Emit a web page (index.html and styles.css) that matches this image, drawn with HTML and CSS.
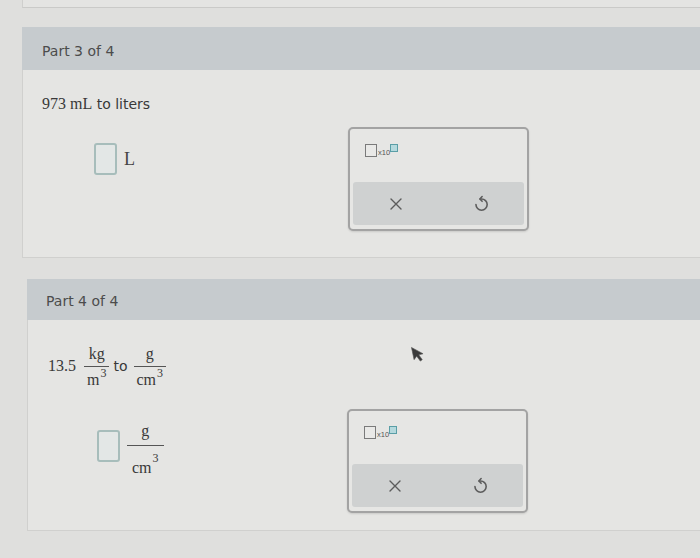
FILE: index.html
```html
<!DOCTYPE html>
<html lang="en">
<head>
<meta charset="utf-8">
<title>Parts</title>
<link rel="stylesheet" href="styles.css">
</head>
<body>
<div class="page">
  <div class="card-stub"></div>

  <section class="card card--p3">
    <div class="card-head">Part 3 of 4</div>
    <div class="card-body">
      <p class="question"><span class="serif">973 mL</span> to liters</p>
      <div class="row">
        <div class="answer answer--p3">
          <span class="input"></span><span class="unit">L</span>
        </div>
        <div class="toolbox">
          <div class="tool-top">
            <span class="sci"><span class="sci-box"></span><span class="sci-x">x10</span><span class="sci-exp"></span></span>
          </div>
          <div class="tool-actions">
            <span class="tool-btn"><svg width="14" height="14" viewBox="0 0 14 14"><path d="M2 2L12 12M12 2L2 12" stroke="#5c5c5c" stroke-width="1.4" fill="none" stroke-linecap="round"/></svg></span>
            <span class="tool-btn"><svg width="18" height="18" viewBox="0 0 16 16"><path d="M7.2 3.5h1.3a5 5 0 1 1-5 5" stroke="#5c5c5c" stroke-width="1.4" fill="none" stroke-linecap="round"/><path d="M9 1.4L7 3.5L9 5.6" stroke="#5c5c5c" stroke-width="1.4" fill="none" stroke-linecap="round" stroke-linejoin="round"/></svg></span>
          </div>
        </div>
      </div>
    </div>
  </section>

  <section class="card card--p4">
    <div class="card-head">Part 4 of 4</div>
    <div class="card-body">
      <p class="question question--math"><span class="serif">13.5</span><span class="frac q-frac"><span class="frac-num">kg</span><span class="frac-bar"></span><span class="frac-den"><span class="base">m</span><span class="exp">3</span></span></span><span class="to">to</span><span class="frac"><span class="frac-num">g</span><span class="frac-bar"></span><span class="frac-den"><span class="base">cm</span><span class="exp">3</span></span></span></p>
      <div class="row">
        <div class="answer answer--p4">
          <span class="input"></span>
          <span class="frac frac--ans"><span class="frac-num">g</span><span class="frac-bar"></span><span class="frac-den"><span class="base">cm</span><span class="exp">3</span></span></span>
        </div>
        <div class="toolbox">
          <div class="tool-top">
            <span class="sci"><span class="sci-box"></span><span class="sci-x">x10</span><span class="sci-exp"></span></span>
          </div>
          <div class="tool-actions">
            <span class="tool-btn"><svg width="14" height="14" viewBox="0 0 14 14"><path d="M2 2L12 12M12 2L2 12" stroke="#5c5c5c" stroke-width="1.4" fill="none" stroke-linecap="round"/></svg></span>
            <span class="tool-btn"><svg width="18" height="18" viewBox="0 0 16 16"><path d="M7.2 3.5h1.3a5 5 0 1 1-5 5" stroke="#5c5c5c" stroke-width="1.4" fill="none" stroke-linecap="round"/><path d="M9 1.4L7 3.5L9 5.6" stroke="#5c5c5c" stroke-width="1.4" fill="none" stroke-linecap="round" stroke-linejoin="round"/></svg></span>
          </div>
        </div>
      </div>
    </div>
  </section>

  <svg class="cursor" width="14" height="18" viewBox="0 0 14 18"><path d="M1 1L1 13.5L4.3 10.6L6.8 16.2L9 15.2L6.6 9.8L11 9.6Z" fill="#3a3a3a" stroke="#5a5a5a" stroke-width="0.6"/></svg>
</div>
</body>
</html>
```

FILE: styles.css
```css
html, body {
  margin: 0;
  padding: 0;
}

body {
  background: #dededc;
  font-family: "DejaVu Sans", Verdana, sans-serif;
  color: #3a3a3a;
}

.page {
  position: relative;
  width: 700px;
  height: 558px;
  overflow: hidden;
  background: #dfdfdd;
}

.card-stub {
  height: 8px;
  margin-left: 22px;
  margin-right: -20px;
  background: #e4e4e2;
  border-left: 1px solid #cfcfcd;
  border-bottom: 1px solid #cacac8;
  box-sizing: border-box;
}

.card {
  margin-right: -20px;
}

.card--p3 {
  margin-top: 19px;
  margin-left: 22px;
}

.card--p4 {
  margin-top: 21px;
  margin-left: 27px;
}

.card-head {
  background: #c6cbce;
  color: #4c4c4c;
  font-size: 14px;
  display: flex;
  align-items: center;
  box-sizing: border-box;
  padding-left: 20px;
}

.card--p3 .card-head {
  height: 43px;
  padding-top: 4px;
}

.card--p4 .card-head {
  height: 41px;
  padding-top: 3px;
  padding-left: 19px;
}

.card-body {
  background: #e5e5e3;
  border: 1px solid #d0d0ce;
  border-top: none;
  box-sizing: border-box;
  padding-left: 19px;
}

.card--p3 .card-body {
  height: 188px;
  padding-top: 24px;
}

.card--p4 .card-body {
  height: 211px;
  padding-top: 26px;
  padding-left: 20px;
}

.question {
  margin: 0;
  font-size: 14px;
  line-height: 20px;
  color: #383838;
}

.serif {
  font-family: "Liberation Serif", "Times New Roman", serif;
  font-size: 16px;
}

.row {
  display: flex;
  align-items: flex-start;
}

.card--p3 .row {
  margin-top: 13px;
}

.card--p4 .row {
  margin-top: 21px;
}

.answer {
  display: flex;
  flex: none;
}

.answer--p3 {
  width: 306px;
  align-items: center;
  margin-top: 16px;
}

.answer--p3 .input {
  margin-left: 52px;
}

.answer--p4 {
  width: 299px;
  align-items: flex-start;
}

.answer--p4 .input {
  margin-left: 49px;
  margin-top: 21px;
}

.input {
  display: block;
  width: 23px;
  height: 32px;
  box-sizing: border-box;
  border: 2px solid #a7bdbb;
  border-radius: 3px;
  background: #e3e7e6;
}

.unit {
  font-family: "Liberation Serif", "Times New Roman", serif;
  font-size: 18px;
  color: #444;
  margin-left: 7px;
}

/* fractions */
.frac {
  display: inline-flex;
  flex-direction: column;
  vertical-align: middle;
  font-family: "Liberation Serif", "Times New Roman", serif;
  font-size: 16px;
  color: #383838;
}

.frac-num {
  line-height: 16px;
  padding: 0 4px 4px;
  text-align: center;
}

.frac-bar {
  height: 0;
  border-top: 1px solid #555;
}

.frac-den {
  display: flex;
  justify-content: center;
  align-items: flex-start;
  padding: 0 3px;
}

.frac-den .base {
  line-height: 16px;
  margin-top: 5px;
}

.frac-den .exp {
  font-size: 12px;
  line-height: 12px;
  margin-left: 1px;
}

.q-frac {
  margin-left: 8px;
  margin-right: 4px;
}

.to {
  font-size: 14px;
  margin-right: 6px;
}

.frac--ans {
  margin-top: 14px;
  margin-left: 7px;
}

.frac--ans .frac-num {
  padding-bottom: 6px;
}

.frac--ans .frac-den {
  padding: 0 5px;
}

.frac--ans .frac-den .base {
  margin-top: 14px;
}

.frac--ans .frac-den .exp {
  margin-top: 6px;
}

/* toolbox */
.toolbox {
  flex: none;
  width: 181px;
  height: 104px;
  box-sizing: border-box;
  border: 2px solid #a3a3a3;
  border-radius: 5px;
  background: #e6e6e4;
  box-shadow: 0 1px 2px rgba(0, 0, 0, 0.12);
  padding: 0 3px 4px;
  display: flex;
  flex-direction: column;
}

.tool-top {
  height: 53px;
  box-sizing: border-box;
  padding: 15px 0 0 12px;
}

.sci {
  display: flex;
  align-items: flex-end;
}

.sci-box {
  width: 12px;
  height: 13px;
  box-sizing: border-box;
  border: 1px solid #7a7a7a;
  background: #e9e9e7;
}

.sci-x {
  font-family: "Liberation Sans", Arial, sans-serif;
  font-size: 7.5px;
  line-height: 8px;
  color: #555;
  margin-left: 1px;
}

.sci-exp {
  align-self: flex-start;
  width: 8px;
  height: 8px;
  box-sizing: border-box;
  border: 1px solid #5a9ea6;
  background: #b5d9dd;
  margin-top: 0;
}

.tool-actions {
  flex: 1;
  display: flex;
  background: #cfd1d1;
  border-radius: 3px;
}

.tool-btn {
  flex: 1;
  display: flex;
  align-items: center;
  justify-content: center;
}

.cursor {
  position: absolute;
  left: 412px;
  top: 345px;
  transform: rotate(-12deg);
}
```
